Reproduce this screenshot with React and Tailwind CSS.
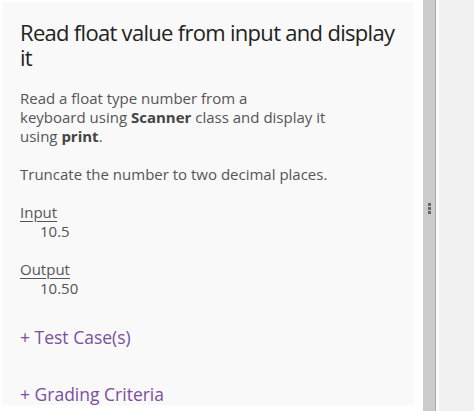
export default function App() {
  return (
    <div className="flex h-[411px] w-[474px] bg-white overflow-hidden" style={{ fontFamily: '"Open Sans", "Noto Sans", sans-serif' }}>
      <div className="w-[416px] shrink-0 pl-[2px] pr-[2px] pt-[2px] pb-[6px] flex">
        <div className="flex-1 bg-[#f9f9f9] pl-[18px] pr-[8px] pt-[18px] overflow-hidden">
          <h1 className="text-[22px] leading-[25px] tracking-[-0.7px] text-[#222] font-normal">
            Read float value from input and display it
          </h1>
          <div className="mt-[19px] text-[15px] leading-[19px] text-[#555]">
            <p>
              Read a float type number from a<br />
              keyboard using <b className="text-[#444]">Scanner</b> class and display it<br />
              using <b className="text-[#444]">print</b>.
            </p>
            <p className="mt-[19px]">Truncate the number to two decimal places.</p>
            <div className="mt-[19px]">
              <div className="underline underline-offset-[3px]">Input</div>
              <div className="pl-[20px]">10.5</div>
            </div>
            <div className="mt-[19px]">
              <div className="underline underline-offset-[3px]">Output</div>
              <div className="pl-[20px]">10.50</div>
            </div>
          </div>
          <div className="mt-[28px] text-[17.5px] leading-[22px] text-[#7b4f9e]">+ Test Case(s)</div>
          <div className="mt-[35px] text-[17.5px] leading-[22px] text-[#7b4f9e]">+ Grading Criteria</div>
        </div>
      </div>
      <div className="w-[7px] shrink-0" />
      <div className="w-[13px] shrink-0 bg-[#cbcbcb] border-r border-[#a9a9a9] flex items-center justify-center">
        <div className="flex flex-col gap-[1px] mt-[6px]">
          <span className="block w-[3px] h-[3px] bg-[#666]" />
          <span className="block w-[3px] h-[3px] bg-[#666]" />
          <span className="block w-[3px] h-[3px] bg-[#666]" />
        </div>
      </div>
      <div className="flex-1 bg-[#f1f1f1] border-l-[3px] border-[#fafafa]" />
    </div>
  );
}
